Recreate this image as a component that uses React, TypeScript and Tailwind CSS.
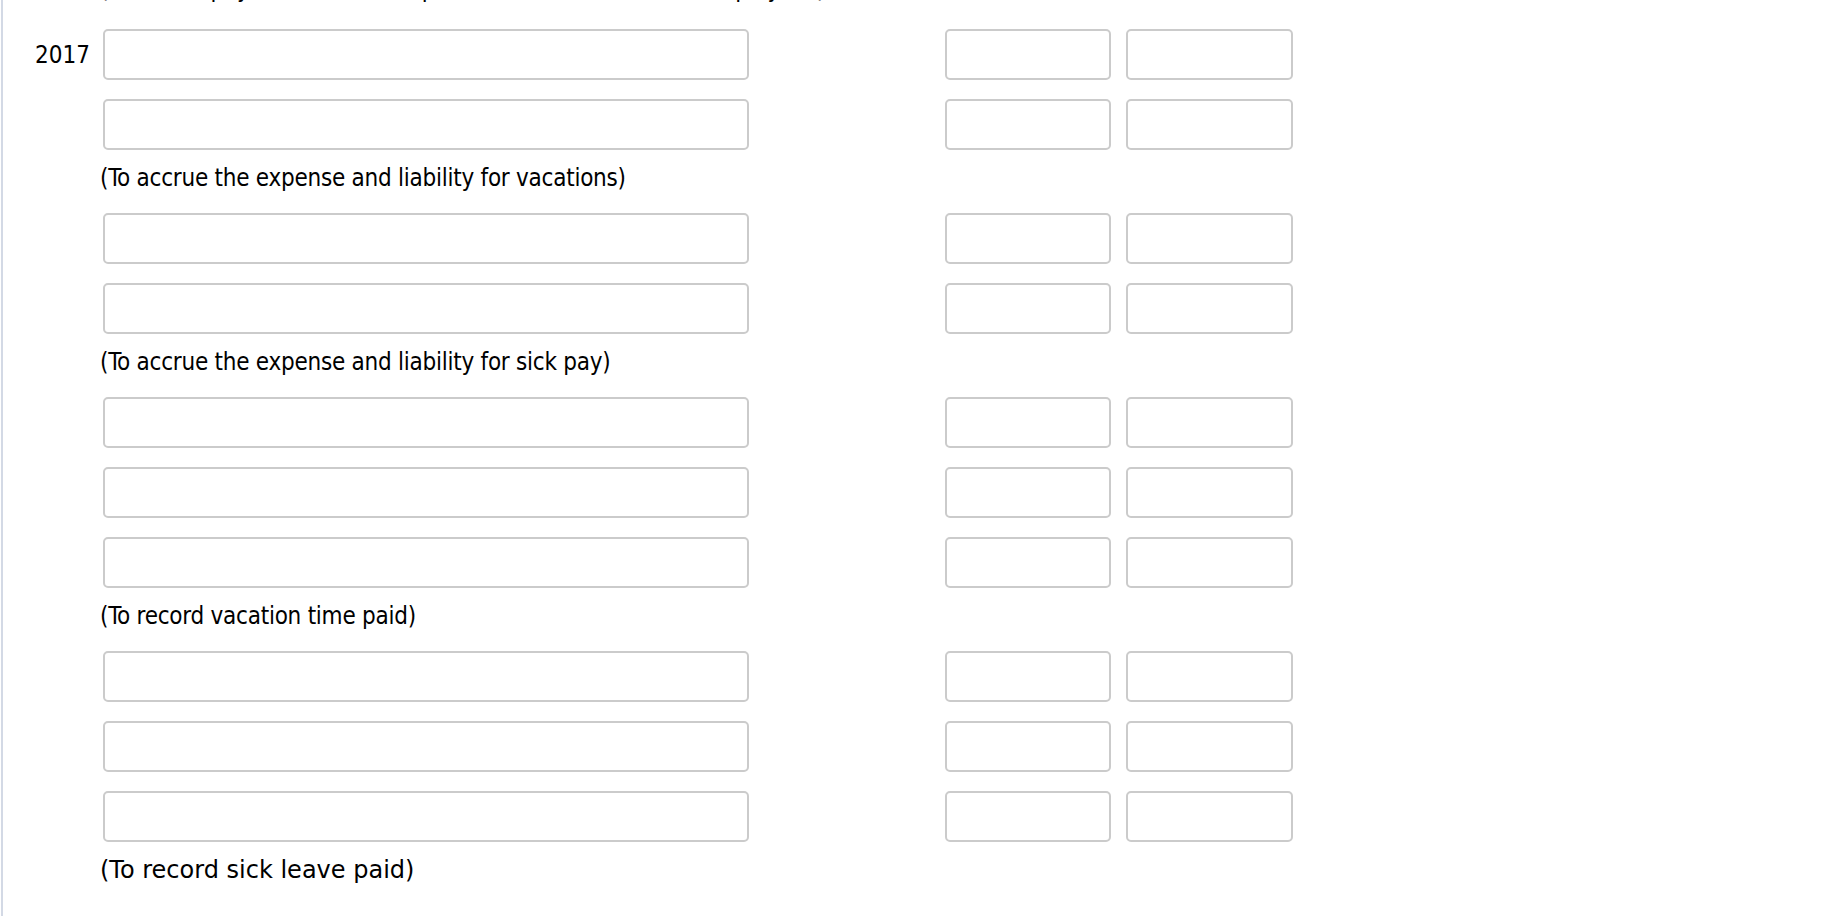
type Row = { date?: string }

type Entry = { rows: Row[]; note: string; wide?: boolean }

const entries: Entry[] = [
  { rows: [{ date: '2017' }, {}], note: '(To accrue the expense and liability for vacations)' },
  { rows: [{}, {}], note: '(To accrue the expense and liability for sick pay)' },
  { rows: [{}, {}, {}], note: '(To record vacation time paid)' },
  { rows: [{}, {}, {}], note: '(To record sick leave paid)', wide: true },
]

const field = 'h-[51px] rounded-[5px] border-2 border-[#cbcbcb] bg-white outline-none'

function EntryRow({ date }: Row) {
  return (
    <div className="flex items-center">
      <div className="w-[100px] pr-[13px] text-right text-[24px] leading-none">{date ?? ''}</div>
      <input type="text" className={`${field} w-[646px]`} />
      <div className="w-[196px]" />
      <input type="text" className={`${field} w-[166px]`} />
      <div className="w-[15px]" />
      <input type="text" className={`${field} w-[167px]`} />
    </div>
  )
}

function Note({ text, wide }: { text: string; wide?: boolean }) {
  return (
    <p
      className={`h-[25px] pl-[97px] text-[24px] leading-[18px] whitespace-nowrap ${wide ? '' : 'tracking-[-0.25px]'}`}
      style={wide ? { fontFamily: '"DejaVu Sans", Verdana, sans-serif' } : undefined}
    >
      {text}
    </p>
  )
}

export default function App() {
  return (
    <div
      className="min-h-screen bg-white text-black"
      style={{ fontFamily: '"DejaVu Sans Condensed", "DejaVu Sans", Tahoma, sans-serif' }}
    >
      <div className="ml-px flex min-h-screen flex-col border-l-2 border-[#d3d9e5]">
        {/* previous entry note, cut off by the top of the page */}
        <div className="flex h-[29px] flex-col overflow-hidden">
          <p className="-mt-[20px] pl-[97px] text-[24px] leading-[18px] tracking-[-0.25px] whitespace-nowrap">
            (To record payroll and the compensated absences of the employees)
          </p>
        </div>

        <div className="flex flex-col gap-[19px]">
          {entries.map((entry, i) => (
            <div key={i} className="contents">
              {entry.rows.map((row, j) => (
                <EntryRow key={j} {...row} />
              ))}
              <Note text={entry.note} wide={entry.wide} />
            </div>
          ))}
        </div>
      </div>
    </div>
  )
}
